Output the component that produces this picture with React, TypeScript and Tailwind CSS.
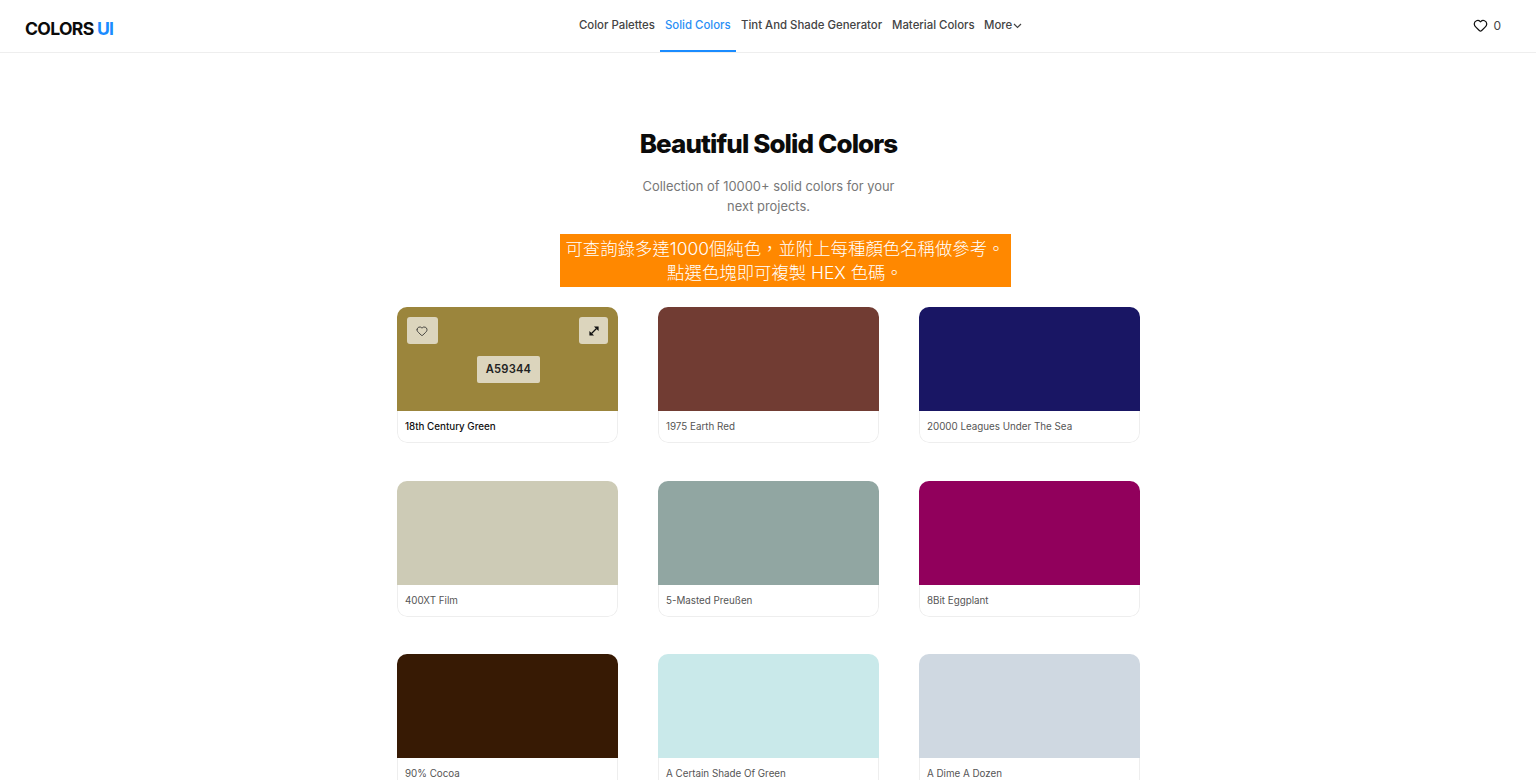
import React from "react";
import { Heart } from "lucide-react";

const font = "font-['Inter','Noto_Sans_CJK_TC',sans-serif]";

const colors = [
  { name: "18th Century Green", bg: "bg-[#9b853c]", active: true },
  { name: "1975 Earth Red", bg: "bg-[#713c33]" },
  { name: "20000 Leagues Under The Sea", bg: "bg-[#191664]" },
  { name: "400XT Film", bg: "bg-[#cdcbb6]" },
  { name: "5-Masted Preußen", bg: "bg-[#91a6a2]" },
  { name: "8Bit Eggplant", bg: "bg-[#91005c]" },
  { name: "90% Cocoa", bg: "bg-[#371a04]" },
  { name: "A Certain Shade Of Green", bg: "bg-[#c9e9ea]" },
  { name: "A Dime A Dozen", bg: "bg-[#cfd8e1]" },
];

function ExpandIcon() {
  return (
    <svg width="12" height="12" viewBox="0 0 12 12" fill="none" stroke="#111" strokeWidth="1.2">
      <path d="M3.5 8.5 8.5 3.5" />
      <path d="M7.4 2h2.6v2.6z" fill="#111" />
      <path d="M2 7.4v2.6h2.6z" fill="#111" />
    </svg>
  );
}

function Card({ name, bg, active }: { name: string; bg: string; active?: boolean }) {
  return (
    <div className="h-[136px] rounded-[10px] overflow-hidden bg-white flex flex-col">
      <div className={`relative h-[104px] shrink-0 ${bg}`}>
        {active && (
          <>
            <div className="absolute left-[10px] top-[10px] w-[31px] h-[27px] rounded-[3px] bg-[#dcd5bd] flex items-center justify-center">
              <Heart size={12} strokeWidth={1.6} className="text-[#222] -ml-[1px]" />
            </div>
            <div className="absolute right-[10px] top-[10px] w-[29px] h-[27px] rounded-[3px] bg-[#dcd5bd] flex items-center justify-center">
              <ExpandIcon />
            </div>
            <div className="absolute left-[80px] top-[49px] w-[63px] h-[27px] rounded-[2px] bg-[#dcd5bd] flex items-center justify-center text-[11.2px] font-semibold tracking-[0.2px] text-[#222]">
              A59344
            </div>
          </>
        )}
      </div>
      <div className={`grow border-x border-b border-[#eeeeee] rounded-b-[10px] pl-[7px] pt-[9px] text-[9.8px] leading-[14px] whitespace-nowrap ${active ? "font-medium text-[#111]" : "text-[#555]"}`}>
        {name}
      </div>
    </div>
  );
}

export default function App() {
  return (
    <div className={`${font} h-screen overflow-hidden bg-white flex flex-col`}>
      <header className="h-[53px] shrink-0 border-b border-[#eeeeee] flex items-stretch relative">
        <div className="w-[550px] shrink-0 pl-[25px] pt-[18px] text-[17.6px] leading-[22px] font-bold tracking-[-0.7px] text-[#0b0b0b]">
          COLORS <span className="text-[#1a8cff]">UI</span>
        </div>
        <nav className="flex items-start text-[11.4px] leading-[16px] font-medium text-[#444]">
          <a className="w-[110px] pl-[29px] pt-[17px] whitespace-nowrap">Color Palettes</a>
          <a className="w-[76px] pl-[5px] h-[52px] pt-[17px] whitespace-nowrap text-[#2a8ff5] border-b-2 border-[#1a8cff]">Solid Colors</a>
          <a className="w-[156px] pl-[5px] pt-[17px] whitespace-nowrap">Tint And Shade Generator</a>
          <a className="w-[92px] pt-[17px] whitespace-nowrap">Material Colors</a>
          <a className="pt-[17px] whitespace-nowrap flex items-start gap-[1px]">
            More
            <svg width="9" height="6" viewBox="0 0 9 6" fill="none" stroke="#444" strokeWidth="1.2" className="mt-[6px]">
              <path d="M1 1l3.5 3.5L8 1" />
            </svg>
          </a>
        </nav>
        <div className="absolute right-[35px] top-[17px] flex items-center gap-[5px] text-[12px] leading-[16px] text-[#444]">
          <Heart size={15} strokeWidth={2} className="text-[#111]" />
          <span className="mt-[1px]">0</span>
        </div>
      </header>
      <main className="flex flex-col items-center">
        <h1 className="mt-[73px] text-[26px] leading-[36px] font-extrabold tracking-[-0.9px] text-[#0b0b0b] ml-[1px]">
          Beautiful Solid Colors
        </h1>
        <p className="mt-[15px] w-[300px] text-center text-[12.9px] leading-[20px] text-[#777] ml-[1px]">
          Collection of 10000+ solid colors for your
          <br />
          next projects.
        </p>
        <div className="mt-[17px] ml-[34px] w-[451px] h-[53px] py-[3px] bg-[#ff8800] text-white text-center text-[17.4px] leading-[24px] font-light whitespace-nowrap">
          可查詢錄多達1000個純色，並附上每種顏色名稱做參考。
          <br />
          點選色塊即可複製 HEX 色碼。
        </div>
        <div className="mt-[20px] ml-[1px] grid grid-cols-[221px_221px_221px] gap-x-[40px] gap-y-[37.5px]">
          {colors.map((c) => (
            <Card key={c.name} {...c} />
          ))}
        </div>
      </main>
    </div>
  );
}
